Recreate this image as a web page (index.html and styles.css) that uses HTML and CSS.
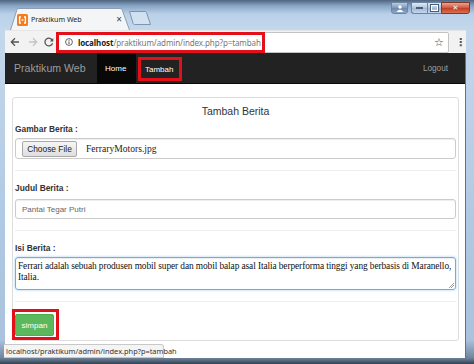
FILE: index.html
```html
<!DOCTYPE html>
<html>
<head>
<meta charset="utf-8">
<link rel="stylesheet" href="styles.css">
</head>
<body>
<div class="window">
  <div class="titlebar">
    <div class="tabs">
      <div class="tab">
        <svg class="tab-shape" width="120" height="22" viewBox="0 0 120 22"><path d="M0.5 22 L7 1.5 Q7.6 0.5 9 0.5 L110 0.5 Q111.4 0.5 112 1.5 L119.5 22" fill="#f4f5f6" stroke="#8c9fb5" stroke-width="1"/></svg>
        <svg class="favicon" width="11" height="12" viewBox="0 0 11 12"><rect x="0" y="0" width="11" height="12" rx="1.5" fill="#f47c20"/><path d="M4 3 H2.6 V9 H4 M7 3 H8.4 V9 H7" fill="none" stroke="#fff" stroke-width="1.3"/><rect x="4.6" y="5.3" width="1.8" height="1.4" fill="#fff"/></svg>
        <span class="tab-title">Praktikum Web</span>
        <span class="tab-close">×</span>
      </div>
      <svg class="newtab" width="22" height="14" viewBox="0 0 22 14"><path d="M0.5 0.5 H16 Q17 0.5 17.5 1.5 L21.5 13.5 H5.5 Q4.6 13.5 4.2 12.6 Z" fill="#d9e6f3" fill-opacity="0.75" stroke="#7f94ad" stroke-width="1"/></svg>
    </div>
    <div class="controls">
      <div class="ctl ctl-user"><svg width="8" height="7" viewBox="0 0 8 7"><circle cx="4" cy="2" r="1.7" fill="#fff"/><path d="M0.5 7 Q4 2.5 7.5 7 Z" fill="#fff"/></svg></div>
      <div class="ctl-group">
        <div class="ctl ctl-min"><span class="min-bar"></span></div>
        <div class="ctl ctl-max"><span class="max-box"></span></div>
        <div class="ctl ctl-close">✕</div>
      </div>
    </div>
  </div>
  <div class="body">
    <div class="toolbar">
      <svg class="nav-ico" width="10" height="10" viewBox="0 0 10 10"><path d="M9 5 H1.5 M5 1.3 L1.3 5 L5 8.7" fill="none" stroke="#555" stroke-width="1.3"/></svg>
      <svg class="nav-ico" width="10" height="10" viewBox="0 0 10 10"><path d="M1 5 H8.5 M5 1.3 L8.7 5 L5 8.7" fill="none" stroke="#c4c4c4" stroke-width="1.3"/></svg>
      <svg class="nav-ico" width="10" height="10" viewBox="0 0 10 10"><path d="M8.5 3.6 A3.9 3.9 0 1 0 8.6 6.2" fill="none" stroke="#555" stroke-width="1.3"/><path d="M9.3 1 V4.4 H5.9 Z" fill="#555"/></svg>
      <div class="omnibox">
        <div class="url-hl">
          <svg class="info" width="8" height="8" viewBox="0 0 8 8"><circle cx="4" cy="4" r="3.4" fill="none" stroke="#555" stroke-width="0.9"/><rect x="3.5" y="3.4" width="1" height="2.8" fill="#555"/><rect x="3.5" y="1.8" width="1" height="1" fill="#555"/></svg>
          <span class="url"><b>localhost</b>/praktikum/admin/index.php?p=tambah</span>
        </div>
        <span class="star">☆</span>
      </div>
      <span class="menu">⋮</span>
    </div>
    <div class="viewport">
      <nav class="navbar">
        <span class="brand">Praktikum Web</span>
        <span class="nav-link active">Home</span>
        <span class="nav-mark"><span class="nav-link tambah">Tambah</span></span>
        <span class="nav-right">Logout</span>
      </nav>
      <div class="panel">
        <div class="panel-title">Tambah Berita</div>
        <div class="label">Gambar Berita :</div>
        <div class="filebox">
          <span class="choose">Choose File</span>
          <span class="fname">FerraryMotors.jpg</span>
        </div>
        <div class="sep"></div>
        <div class="label">Judul Berita :</div>
        <div class="input">Pantai Tegar Putri</div>
        <div class="sep"></div>
        <div class="label">Isi Berita :</div>
        <div class="textarea">Ferrari adalah sebuah produsen mobil super dan mobil balap asal Italia berperforma tinggi yang berbasis di Maranello, Italia.<span class="grip"></span></div>
        <div class="sep"></div>
        <div class="btn-row">
          <span class="btn-mark"><span class="btn">simpan</span></span>
        </div>
      </div>
    </div>
  </div>
  <div class="status">localhost/praktikum/admin/index.php?p=tambah</div>
</div>
</body>
</html>
```

FILE: styles.css
```css
* { box-sizing: border-box; }
html, body { margin: 0; padding: 0; }
body { width: 474px; height: 364px; overflow: hidden; background: #3d4d60; }

.window {
  position: relative;
  width: 474px;
  height: 364px;
  display: flex;
  flex-direction: column;
  background: linear-gradient(to bottom, #4f6580 0px, #8aa6c6 6px, #b9d0e8 14px, #c4d8ec 30px, #b2cbe4 200px, #a9c2dd 340px, #6f849c 358px, #34414f 364px);
}

/* title bar */
.titlebar {
  height: 30px;
  display: flex;
  justify-content: space-between;
  align-items: flex-start;
  padding-left: 10px;
  padding-right: 4px;
}
.tabs { display: flex; align-items: flex-end; height: 30px; }
.tab {
  position: relative;
  width: 120px;
  height: 22px;
  display: flex;
  align-items: center;
  padding-left: 7px;
  font-family: "Noto Sans", "Open Sans", sans-serif;
}
.tab-shape { position: absolute; left: 0; top: 0; }
.favicon { position: relative; margin-right: 3px; margin-top: 1px; }
.tab-title { position: relative; font-size: 7.1px; color: #222; letter-spacing: 0; }
.tab-close { position: relative; margin-left: auto; margin-right: 8px; font-size: 10px; color: #444; }
.newtab { margin-left: -1px; margin-bottom: 5px; }

.controls { display: flex; gap: 3px; padding-top: 2px; }
.ctl {
  height: 12px;
  display: flex;
  align-items: center;
  justify-content: center;
  border: 1px solid #6e84a0;
  background: linear-gradient(to bottom, #dfeaf6, #aec3dc 50%, #9fb7d3 51%, #c3d6ec);
}
.ctl-user { width: 17px; border-radius: 0 0 3px 3px; background: linear-gradient(to bottom, #b9cbe0, #7d97b8 50%, #6a86aa 51%, #8fa9c9); }
.ctl-group { display: flex; }
.ctl-min { width: 16px; border-radius: 0 0 0 3px; border-right: none; }
.ctl-max { width: 14px; border-right: none; }
.ctl-close {
  width: 29px;
  border-radius: 0 0 3px 0;
  border-color: #7b3a2e;
  background: linear-gradient(to bottom, #e8a493, #d0533a 50%, #c23b22 51%, #d9704f);
  color: #fff;
  font-size: 7px;
  font-family: "DejaVu Sans", sans-serif;
  font-weight: bold;
}
.min-bar { width: 7px; height: 2px; background: #fff; border: 0.5px solid #4a5d76; }
.max-box { width: 7px; height: 6px; border: 1.5px solid #fff; outline: 0.5px solid #4a5d76; }

/* body */
.body {
  flex: 1;
  display: flex;
  flex-direction: column;
  padding: 0 8px 6px 5px;
  min-height: 0;
}
.toolbar {
  height: 23px;
  background: #f2f2f2;
  display: flex;
  align-items: center;
  padding-left: 5px;
  gap: 0;
  border-top: 1px solid #e6e6e6;
}
.nav-ico { margin-right: 6px; }
.nav-ico:first-child { margin-right: 8px; }
.omnibox {
  width: 393px;
  height: 21px;
  margin-left: -3px;
  background: #fff;
  border: 1px solid #c3c3c3;
  border-radius: 2px;
  display: flex;
  align-items: center;
  position: relative;
}
.url-hl {
  width: 209px;
  height: 21px;
  margin-left: -2px;
  margin-top: -1px;
  margin-bottom: -1px;
  border: 3px solid #e3101a;
  display: flex;
  align-items: center;
  padding-left: 6px;
  font-family: "Noto Sans", "Open Sans", sans-serif;
}
.info { margin-right: 5px; }
.url { font-size: 8px; color: #777; white-space: nowrap; letter-spacing: -0.1px; }
.url b { color: #222; font-weight: bold; }
.star { margin-left: auto; margin-right: 4px; font-size: 11px; color: #444; font-family: "DejaVu Sans", sans-serif; }
.menu { margin-left: 6px; font-size: 11px; color: #555; font-family: "DejaVu Sans", sans-serif; font-weight: bold; }

.viewport {
  flex: 1;
  background: #fff;
  display: flex;
  flex-direction: column;
  font-family: "Liberation Sans", Arial, sans-serif;
  color: #333;
  border-right: 1px solid #5d728c;
}

/* navbar */
.navbar {
  height: 31px;
  background: #222;
  border-bottom: 1px solid #080808;
  display: flex;
  align-items: stretch;
  padding-left: 9px;
  padding-right: 17px;
}
.brand { display: flex; align-items: center; font-size: 10.6px; color: #9d9d9d; width: 83px; }
.nav-link { display: flex; align-items: center; font-size: 8px; color: #fff; padding: 0 8px; }
.nav-link.active { background: #080808; width: 39px; }
.nav-mark {
  display: flex;
  margin: 4px 0 2px 2px;
  border: 3px solid #e3101a;
  width: 44px;
}
.nav-mark .tambah { padding: 0 0 0 4px; }
.nav-right { margin-left: auto; display: flex; align-items: center; font-size: 8.2px; color: #9d9d9d; }

/* panel */
.panel {
  margin: 13px 6px 0 7px;
  border: 1px solid #dddddd;
  border-radius: 3px;
  padding: 0 2px;
  display: flex;
  flex-direction: column;
}
.panel-title { text-align: center; font-size: 10.5px; line-height: 25px; height: 25px; color: #333; padding-top: 1px; }
.label { font-size: 8.4px; font-weight: bold; line-height: 12px; height: 12px; color: #333; margin-bottom: 3px; }
.label + .input { margin-top: 2px; }
.filebox {
  height: 21px;
  border: 1px solid #ccc;
  border-radius: 3px;
  box-shadow: inset 0 1px 1px rgba(0,0,0,.075);
  display: flex;
  align-items: center;
  padding-left: 6px;
}
.choose {
  height: 16px;
  width: 55px;
  display: flex;
  align-items: center;
  justify-content: center;
  font-size: 8.4px;
  color: #222;
  border: 1px solid #a9a9a9;
  border-radius: 2px;
  background: linear-gradient(to bottom, #f6f6f6, #dedede);
}
.fname { margin-left: 9px; font-family: "Liberation Serif", "Times New Roman", serif; font-size: 9.6px; color: #222; }
.sep { height: 1px; background: #eeeeee; margin: 11px 0 11px; }
.input {
  height: 20px;
  border: 1px solid #ccc;
  border-radius: 3px;
  box-shadow: inset 0 1px 1px rgba(0,0,0,.075);
  display: flex;
  align-items: center;
  padding-left: 6px;
  font-size: 8px;
  color: #666;
}
.textarea {
  position: relative;
  height: 33px;
  border: 1px solid #66afe9;
  border-radius: 3px;
  box-shadow: inset 0 1px 1px rgba(0,0,0,.075), 0 0 3px rgba(102,175,233,.6);
  padding: 3px 0 0 2px;
  font-family: "Liberation Serif", "Times New Roman", serif;
  font-size: 9.4px;
  letter-spacing: -0.1px;
  line-height: 10.5px;
  color: #111;
}
.grip {
  position: absolute;
  right: 1px;
  bottom: 1px;
  width: 5px;
  height: 5px;
  background: linear-gradient(135deg, transparent 45%, #999 45%, #999 55%, transparent 55%, transparent 70%, #999 70%, #999 80%, transparent 80%);
}
.btn-row { display: flex; padding-left: 0; margin-top: -4px; }
.btn-mark { display: flex; border: 3px solid #e3101a; padding: 2px 2px 1px 0; margin-left: -3px; }
.btn {
  width: 39px;
  height: 22px;
  background: #5cb85c;
  border: 1px solid #4cae4c;
  border-radius: 2px;
  color: #fff;
  font-size: 8px;
  display: flex;
  align-items: center;
  justify-content: center;
}

/* status bubble */
.status {
  position: absolute;
  left: 4px;
  top: 344px;
  width: 160px;
  height: 14px;
  background: #f4f4f4;
  border: 1px solid #c8c8c8;
  border-left: none;
  border-radius: 0 3px 0 0;
  font-family: "Noto Sans", "Open Sans", sans-serif;
  font-size: 7.4px;
  line-height: 12px;
  color: #333;
  padding-left: 2px;
  white-space: nowrap;
}
```
